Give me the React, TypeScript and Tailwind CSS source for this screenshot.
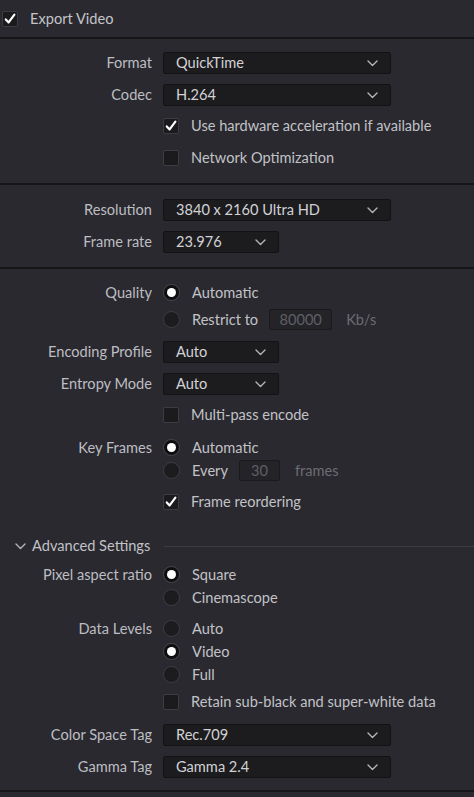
import type { ReactNode } from "react";

const font = { fontFamily: "Lato, 'Open Sans', 'Liberation Sans', sans-serif" };

function Chevron({ className = "" }: { className?: string }) {
  return (
    <svg className={className} width="11" height="7" viewBox="0 0 11 7" fill="none">
      <path d="M1 1l4.5 4.5L10 1" stroke="#b4b4b9" strokeWidth="1.4" strokeLinecap="round" strokeLinejoin="round" />
    </svg>
  );
}

function Check() {
  return (
    <svg width="12" height="12" viewBox="0 0 12 12" fill="none">
      <path d="M1.8 6.4l2.8 3L10.4 1.6" stroke="#ffffff" strokeWidth="2.2" strokeLinecap="round" strokeLinejoin="round" />
    </svg>
  );
}

function Box({ checked = false }: { checked?: boolean }) {
  return (
    <span className="flex h-[16px] w-[16px] shrink-0 items-center justify-center rounded-[2px] border border-[#3c3c42] bg-[#1b1b1e]">
      {checked && <Check />}
    </span>
  );
}

function Radio({ on = false }: { on?: boolean }) {
  return on ? (
    <span className="flex h-[17px] w-[17px] shrink-0 items-center justify-center rounded-full border border-[#4a4a50] bg-[#0e0e10]">
      <span className="h-[9px] w-[9px] rounded-full bg-white" />
    </span>
  ) : (
    <span className="h-[17px] w-[17px] shrink-0 rounded-full border border-[#3d3d43] bg-[#1c1c1f]" />
  );
}

function Select({ value, wide = false }: { value: string; wide?: boolean }) {
  return (
    <div
      className={`flex h-[22px] items-center justify-between rounded-[2px] border border-[#131315] bg-[#1c1c1f] pl-[12px] pr-[12px] text-[14.6px] text-[#d2d2d6] ${
        wide ? "w-[228px]" : "w-[116px]"
      }`}
    >
      <span>{value}</span>
      <Chevron />
    </div>
  );
}

function Field({ value, width }: { value: string; width: string }) {
  return (
    <div className={`flex h-[21px] items-center justify-center rounded-[2px] border border-[#1a1a1d] bg-[#242428] text-[14.6px] text-[#5f5f65] ${width}`}>
      {value}
    </div>
  );
}

function Row({ label, mt = "", children }: { label?: string; mt?: string; children: ReactNode }) {
  return (
    <div className={`flex h-[22px] items-center ${mt}`}>
      <div className="w-[152px] shrink-0 text-right text-[14.6px] text-[#bdbdc2]">{label}</div>
      <div className="ml-[11px] flex items-center">{children}</div>
    </div>
  );
}

function Option({ control, text }: { control: ReactNode; text: string }) {
  return (
    <div className="flex items-center">
      {control}
      <span className="ml-[12px] text-[14.6px] text-[#c2c2c7]">{text}</span>
    </div>
  );
}

function Divider() {
  return <div className="h-[2px] bg-[#161619]" />;
}

export default function App() {
  return (
    <div className="h-[797px] w-[474px] overflow-hidden bg-[#29292f]" style={font}>
      <div className="flex h-[37px] items-center pl-[2px]">
        <Box checked />
        <span className="ml-[12px] text-[14.6px] text-[#c4c4c9]">Export Video</span>
      </div>
      <Divider />

      <div className="pt-[13px] pb-[14px]">
        <Row label="Format">
          <Select value="QuickTime" wide />
        </Row>
        <Row label="Codec" mt="mt-[10px]">
          <Select value="H.264" wide />
        </Row>
        <Row mt="mt-[9px]">
          <Option control={<Box checked />} text="Use hardware acceleration if available" />
        </Row>
        <Row mt="mt-[10px]">
          <Option control={<Box />} text="Network Optimization" />
        </Row>
      </div>
      <Divider />

      <div className="pt-[14px] pb-[14px]">
        <Row label="Resolution">
          <Select value="3840 x 2160 Ultra HD" wide />
        </Row>
        <Row label="Frame rate" mt="mt-[10px]">
          <Select value="23.976" />
        </Row>
      </div>
      <Divider />

      <div className="pt-[13px] pb-[12px]">
        <Row label="Quality">
          <Option control={<Radio on />} text="Automatic" />
        </Row>
        <Row mt="mt-[5px]">
          <Option control={<Radio />} text="Restrict to" />
          <div className="ml-[11px]">
            <Field value="80000" width="w-[63px]" />
          </div>
          <span className="ml-[14px] text-[14.6px] text-[#6c6c72]">Kb/s</span>
        </Row>
        <Row label="Encoding Profile" mt="mt-[10px]">
          <Select value="Auto" />
        </Row>
        <Row label="Entropy Mode" mt="mt-[10px]">
          <Select value="Auto" />
        </Row>
        <Row mt="mt-[9px]">
          <Option control={<Box />} text="Multi-pass encode" />
        </Row>
        <Row label="Key Frames" mt="mt-[11px]">
          <Option control={<Radio on />} text="Automatic" />
        </Row>
        <Row mt="mt-[1px]">
          <Option control={<Radio />} text="Every" />
          <div className="ml-[11px]">
            <Field value="30" width="w-[41px]" />
          </div>
          <span className="ml-[15px] text-[14.6px] text-[#6c6c72]">frames</span>
        </Row>
        <Row mt="mt-[9px]">
          <Option control={<Box checked />} text="Frame reordering" />
        </Row>

        <div className="mt-[22px] flex h-[22px] items-center">
          <Chevron className="ml-[15px]" />
          <span className="ml-[6px] text-[14.6px] text-[#c2c2c7]">Advanced Settings</span>
          <div className="ml-[14px] h-px flex-1 bg-[#3c3c42]" />
        </div>

        <Row label="Pixel aspect ratio" mt="mt-[7px]">
          <Option control={<Radio on />} text="Square" />
        </Row>
        <Row mt="mt-[1px]">
          <Option control={<Radio />} text="Cinemascope" />
        </Row>
        <Row label="Data Levels" mt="mt-[9px]">
          <Option control={<Radio />} text="Auto" />
        </Row>
        <Row mt="mt-[1px]">
          <Option control={<Radio on />} text="Video" />
        </Row>
        <Row mt="mt-[1px]">
          <Option control={<Radio />} text="Full" />
        </Row>
        <Row mt="mt-[5px]">
          <Option control={<Box />} text="Retain sub-black and super-white data" />
        </Row>
        <Row label="Color Space Tag" mt="mt-[11px]">
          <Select value="Rec.709" wide />
        </Row>
        <Row label="Gamma Tag" mt="mt-[10px]">
          <Select value="Gamma 2.4" wide />
        </Row>
      </div>
      <Divider />
    </div>
  );
}
